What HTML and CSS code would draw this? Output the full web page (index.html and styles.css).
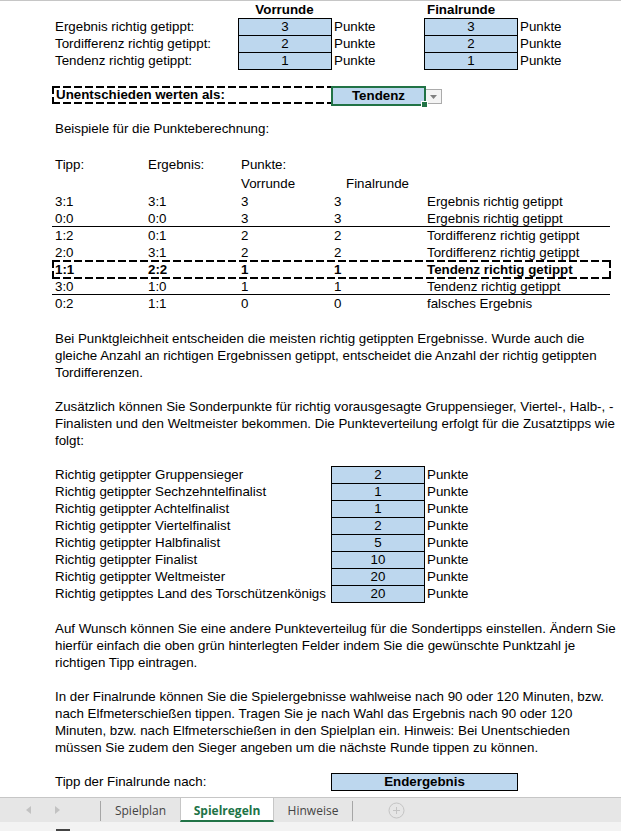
FILE: index.html
```html
<!DOCTYPE html>
<html lang="de">
<head>
<meta charset="utf-8">
<title>Spielregeln</title>
<link rel="stylesheet" href="styles.css">
</head>
<body>
<div class="sheet">
  <div class="r">
    <div class="c cD bold center">Vorrunde</div>
    <div class="c cF bold">Finalrunde</div>
  </div>
  <div class="r">
    <div class="c cB s3">Ergebnis richtig getippt:</div>
    <div class="box cD">3</div><div class="c cE">Punkte</div>
    <div class="box cF">3</div><div class="c cG">Punkte</div>
  </div>
  <div class="r">
    <div class="c cB s3">Tordifferenz richtig getippt:</div>
    <div class="box cD">2</div><div class="c cE">Punkte</div>
    <div class="box cF">2</div><div class="c cG">Punkte</div>
  </div>
  <div class="r">
    <div class="c cB s3">Tendenz richtig getippt:</div>
    <div class="box last cD">1</div><div class="c cE">Punkte</div>
    <div class="box last cF">1</div><div class="c cG">Punkte</div>
  </div>
  <div class="r"></div>
  <div class="r">
    <div class="dashed sel-label bold">Unentschieden werten als:</div>
    <div class="selcell cE bold">Tendenz</div>
    <div class="ddbtn cF"><svg width="7" height="4" viewBox="0 0 7 4"><path d="M0 0H7L3.5 4Z" fill="#808080"/></svg></div>
  </div>
  <div class="r"></div>
  <div class="r"><div class="c cB s6">Beispiele für die Punkteberechnung:</div></div>
  <div class="r"></div>

  <div class="r thead">
    <div class="c cB">Tipp:</div>
    <div class="c cC">Ergebnis:</div>
    <div class="c cD">Punkte:<br>Vorrunde</div>
    <div class="c cE center"><br>Finalrunde</div>
  </div>
  <div class="r">
    <div class="c cB">3:1</div><div class="c cC">3:1</div><div class="c cD">3</div><div class="c cE">3</div><div class="c cF s2">Ergebnis richtig getippt</div>
  </div>
  <div class="r">
    <div class="rule"></div>
    <div class="c cB">0:0</div><div class="c cC">0:0</div><div class="c cD">3</div><div class="c cE">3</div><div class="c cF s2">Ergebnis richtig getippt</div>
  </div>
  <div class="r">
    <div class="c cB">1:2</div><div class="c cC">0:1</div><div class="c cD">2</div><div class="c cE">2</div><div class="c cF s2">Tordifferenz richtig getippt</div>
  </div>
  <div class="r">
    <div class="c cB">2:0</div><div class="c cC">3:1</div><div class="c cD">2</div><div class="c cE">2</div><div class="c cF s2">Tordifferenz richtig getippt</div>
  </div>
  <div class="r bold">
    <div class="dashed rowdash"></div>
    <div class="c cB">1:1</div><div class="c cC">2:2</div><div class="c cD">1</div><div class="c cE">1</div><div class="c cF s2">Tendenz richtig getippt</div>
  </div>
  <div class="r">
    <div class="rule"></div>
    <div class="c cB">3:0</div><div class="c cC">1:0</div><div class="c cD">1</div><div class="c cE">1</div><div class="c cF s2">Tendenz richtig getippt</div>
  </div>
  <div class="r">
    <div class="c cB">0:2</div><div class="c cC">1:1</div><div class="c cD">0</div><div class="c cE">0</div><div class="c cF s2">falsches Ergebnis</div>
  </div>

  <div class="gap18"></div>
  <p class="para">Bei Punktgleichheit entscheiden die meisten richtig getippten Ergebnisse. Wurde auch die<br>gleiche Anzahl an richtigen Ergebnissen getippt, entscheidet die Anzahl der richtig getippten<br>Tordifferenzen.</p>
  <div class="r"></div>
  <p class="para">Zusätzlich können Sie Sonderpunkte für richtig vorausgesagte Gruppensieger, Viertel-, Halb-, -<br>Finalisten und den Weltmeister bekommen. Die Punkteverteilung erfolgt für die Zusatztipps wie<br>folgt:</p>
  <div class="r"></div>

  <div class="r"><div class="c cB s3">Richtig getippter Gruppensieger</div><div class="box cE">2</div><div class="c cF">Punkte</div></div>
  <div class="r"><div class="c cB s3">Richtig getippter Sechzehntelfinalist</div><div class="box cE">1</div><div class="c cF">Punkte</div></div>
  <div class="r"><div class="c cB s3">Richtig getippter Achtelfinalist</div><div class="box cE">1</div><div class="c cF">Punkte</div></div>
  <div class="r"><div class="c cB s3">Richtig getippter Viertelfinalist</div><div class="box cE">2</div><div class="c cF">Punkte</div></div>
  <div class="r"><div class="c cB s3">Richtig getippter Halbfinalist</div><div class="box cE">5</div><div class="c cF">Punkte</div></div>
  <div class="r"><div class="c cB s3">Richtig getippter Finalist</div><div class="box cE">10</div><div class="c cF">Punkte</div></div>
  <div class="r"><div class="c cB s3">Richtig getippter Weltmeister</div><div class="box cE">20</div><div class="c cF">Punkte</div></div>
  <div class="r"><div class="c cB s3">Richtig getipptes Land des Torschützenkönigs</div><div class="box last cE">20</div><div class="c cF">Punkte</div></div>

  <div class="gap18"></div>
  <p class="para">Auf Wunsch können Sie eine andere Punkteverteilug für die Sondertipps einstellen. Ändern Sie<br>hierfür einfach die oben grün hinterlegten Felder indem Sie die gewünschte Punktzahl je<br>richtigen Tipp eintragen.</p>
  <div class="r"></div>
  <p class="para">In der Finalrunde können Sie die Spielergebnisse wahlweise nach 90 oder 120 Minuten, bzw.<br>nach Elfmeterschießen tippen. Tragen Sie je nach Wahl das Ergebnis nach 90 oder 120<br>Minuten, bzw. nach Elfmeterschießen in den Spielplan ein. Hinweis: Bei Unentschieden<br>müssen Sie zudem den Sieger angeben um die nächste Runde tippen zu können.</p>
  <div class="r"></div>
  <div class="r">
    <div class="c cB s3">Tipp der Finalrunde nach:</div>
    <div class="box last wide bold">Endergebnis</div>
  </div>
</div>

<div class="tabbar">
  <div class="nav">
    <svg class="arr" width="5" height="8" viewBox="0 0 5 8"><path d="M5 0V8L0 4Z" fill="#c2c2c2"/></svg>
    <svg class="arr" width="5" height="8" viewBox="0 0 5 8"><path d="M0 0V8L5 4Z" fill="#c2c2c2"/></svg>
  </div>
  <div class="sep"></div>
  <div class="tab t1">Spielplan</div>
  <div class="tab active">Spielregeln</div>
  <div class="tab t3">Hinweise</div>
  <div class="sep"></div>
  <div class="add">
    <svg width="17" height="17" viewBox="0 0 17 17"><circle cx="8.5" cy="8.5" r="7.5" fill="none" stroke="#c4c4c4"/><path d="M8.5 5V12M5 8.5H12" stroke="#c4c4c4"/></svg>
  </div>
</div>
<div class="status"><div class="thumb"></div></div>
</body>
</html>
```
FILE: styles.css
```css
* { box-sizing: border-box; margin: 0; padding: 0; }
html, body { width: 621px; height: 831px; overflow: hidden; }
body {
  font-family: "Liberation Sans", Arial, sans-serif;
  font-size: 13.33px;
  color: #000;
  background: #fff;
}
.sheet {
  height: 797px;
  border-top: 1px solid #c6c6c6;
}
.r {
  display: grid;
  grid-template-columns: 52px repeat(6, 93px) 1fr;
  grid-template-rows: 17px;
  height: 17px;
  line-height: 17px;
  white-space: nowrap;
}
.r > * { grid-row: 1; }
.c { padding-left: 3px; }
.cB { grid-column: 2; }
.cC { grid-column: 3; }
.cD { grid-column: 4; }
.cE { grid-column: 5; }
.cF { grid-column: 6; }
.cG { grid-column: 7; }
.s2 { grid-column-end: span 2; }
.s3 { grid-column-end: span 3; }
.s6 { grid-column-end: span 6; }
.bold { font-weight: bold; }
.center { text-align: center; padding-left: 0; }

.box {
  background: #bdd7ee;
  border: 1px solid #000;
  border-bottom: 0;
  height: 17px;
  margin-right: -1px;
  line-height: 16px;
  text-align: center;
  position: relative;
}
.box.last { border-bottom: 1px solid #000; height: 18px; }
.box.wide { grid-column: 5 / span 2; }

.dashed {
  background:
    repeating-linear-gradient(90deg, #000 0 8px, transparent 8px 11px) left top / 100% 2px no-repeat,
    repeating-linear-gradient(90deg, #000 0 8px, transparent 8px 11px) left bottom / 100% 2px no-repeat,
    repeating-linear-gradient(180deg, #000 0 8px, transparent 8px 11px) left top / 2px 100% no-repeat,
    repeating-linear-gradient(180deg, #000 0 8px, transparent 8px 11px) right top / 2px 100% no-repeat;
}
.sel-label {
  grid-column: 2 / span 3;
  height: 18px;
  margin-right: -4px;
  padding-left: 4px;
  line-height: 18px;
}
.selcell {
  background: #bdd7ee;
  border: 2px solid #217346;
  height: 20px;
  width: 95px;
  text-align: center;
  line-height: 16px;
  position: relative;
  z-index: 1;
}
.selcell::after {
  content: "";
  position: absolute;
  right: -4px;
  bottom: -4px;
  width: 5px;
  height: 5px;
  background: #217346;
  border: 1px solid #fff;
}
.ddbtn {
  margin: 3px 0 0 1px;
  width: 17px;
  height: 15px;
  border: 1px solid #ababab;
  background: #f4f4f4;
  display: flex;
  align-items: center;
  justify-content: center;
  align-self: start;
}

.thead {
  height: 39px;
  grid-template-rows: 39px;
  line-height: 19px;
  padding-top: 1px;
}
.rule {
  grid-column: 2 / span 6;
  border-bottom: 1px solid #000;
}
.rowdash {
  grid-column: 2 / span 6;
  margin: -1px -1px 0 0;
  height: 19px;
}
.r.bold .c { line-height: 17px; }

.gap18 { height: 18px; }
.para {
  padding-left: 55px;
  line-height: 17px;
  white-space: nowrap;
}

/* sheet tab bar */
.tabbar {
  height: 25px;
  background: #e6e6e6;
  border-top: 1px solid #c6c6c6;
  display: flex;
  align-items: stretch;
  font-family: "Open Sans", "Noto Sans", sans-serif;
  font-size: 12px;
  color: #444;
}
.nav {
  width: 100px;
  display: flex;
  align-items: center;
  padding-left: 26px;
  gap: 24px;
}
.sep {
  width: 1px;
  background: #a6a6a6;
  margin: 3px 0 1px;
}
.tab {
  display: flex;
  align-items: center;
  justify-content: center;
  padding-top: 1px;
}
.t1 { width: 79px; }
.active {
  width: 94px;
  background: #fff;
  color: #217346;
  font-weight: bold;
  border-left: 1px solid #c6c6c6;
  border-right: 1px solid #c6c6c6;
  border-bottom: 2px solid #217346;
  padding-top: 2px;
}
.t3 { width: 78px; }
.add {
  width: 86px;
  display: flex;
  align-items: center;
  justify-content: center;
}
.status {
  height: 9px;
  background: #f3f3f3;
  position: relative;
}
.thumb {
  position: absolute;
  left: 56px;
  bottom: 0;
  width: 14px;
  height: 2px;
  background: #444;
}
```
